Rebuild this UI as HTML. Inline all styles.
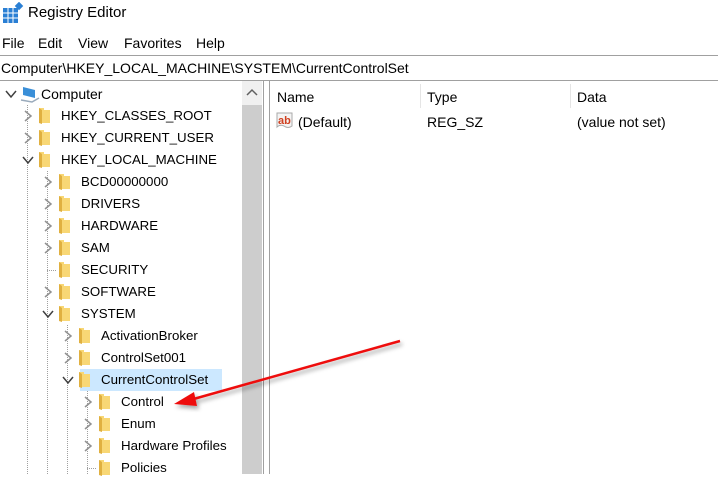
<!DOCTYPE html>
<html><head><meta charset="utf-8"><style>
*{margin:0;padding:0;box-sizing:border-box}
body{width:718px;height:474px;overflow:hidden;background:#fff;font-family:"Liberation Sans",sans-serif;font-size:14px;color:#000;position:relative}
.a{position:absolute;white-space:nowrap}
.t{font-size:13.3px}
</style></head><body>
<svg class="a" style="left:2px;top:2px" width="22" height="22" viewBox="0 0 22 22">
<rect x="1" y="6" width="15" height="15" fill="#2a7fd4"/>
<g stroke="#fff" stroke-width="1"><line x1="6" y1="6" x2="6" y2="21"/><line x1="11" y1="6" x2="11" y2="21"/><line x1="1" y1="11" x2="16" y2="11"/><line x1="1" y1="16" x2="16" y2="16"/></g>
<rect x="14" y="1" width="6" height="6" fill="#2a7fd4" transform="rotate(45 17 4)"/>
</svg>
<div class="a" style="left:28px;top:4px;font-size:15px">Registry Editor</div>
<div class="a" style="left:2px;top:35px">File</div>
<div class="a" style="left:38px;top:35px">Edit</div>
<div class="a" style="left:78px;top:35px">View</div>
<div class="a" style="left:124px;top:35px">Favorites</div>
<div class="a" style="left:196px;top:35px">Help</div>
<div class="a" style="left:0;top:55px;width:718px;height:1px;background:#a0a0a0"></div>
<div class="a" style="left:1px;top:60px">Computer\HKEY_LOCAL_MACHINE\SYSTEM\CurrentControlSet</div>
<div class="a" style="left:0;top:80px;width:718px;height:1px;background:#a0a0a0"></div>
<div class="a" style="left:242px;top:81px;width:20px;height:393px;background:#cdcdcd"></div>
<div class="a" style="left:242px;top:81px;width:20px;height:24px;background:#f0f0f0"></div>
<svg class="a" style="left:245px;top:87px" width="14" height="10"><path d="M2 8 L7 3 L12 8" fill="none" stroke="#606060" stroke-width="1.5"/></svg>
<div class="a" style="left:263px;top:81px;width:1px;height:393px;background:#a0a0a0"></div>
<div class="a" style="left:269px;top:81px;width:1px;height:393px;background:#a0a0a0"></div>
<div class="a" style="left:277px;top:89px">Name</div>
<div class="a" style="left:420px;top:84px;width:1px;height:24px;background:#e5e5e5"></div>
<div class="a" style="left:427px;top:89px">Type</div>
<div class="a" style="left:570px;top:84px;width:1px;height:24px;background:#e5e5e5"></div>
<div class="a" style="left:577px;top:89px">Data</div>
<svg class="a" style="left:276px;top:112px" width="20" height="18"><path d="M1 1 H16 V14 Q12 17 8 14 Q4 12 1 15 Z" fill="#f4f4f4" stroke="#aaa"/><text x="2" y="12" font-family="Liberation Sans" font-weight="bold" font-size="11" fill="#d04020">ab</text></svg>
<div class="a" style="left:298px;top:114px">(Default)</div>
<div class="a" style="left:427px;top:114px">REG_SZ</div>
<div class="a" style="left:577px;top:114px">(value not set)</div>
<div class="a" style="left:27px;top:105px;height:369px;border-left:1px dotted #a0a0a0"></div>
<div class="a" style="left:47px;top:171px;height:303px;border-left:1px dotted #a0a0a0"></div>
<div class="a" style="left:67px;top:325px;height:149px;border-left:1px dotted #a0a0a0"></div>
<div class="a" style="left:87px;top:391px;height:83px;border-left:1px dotted #a0a0a0"></div>
<div class="a" style="left:47px;top:270px;width:9px;border-top:1px dotted #a0a0a0"></div>
<div class="a" style="left:87px;top:468px;width:9px;border-top:1px dotted #a0a0a0"></div>
<div class="a" style="left:80px;top:369px;width:142px;height:22px;background:#cce8ff"></div>
<div id="tree"></div>
<svg class="a" style="left:0;top:0" width="718" height="474">
<defs><filter id="s"><feDropShadow dx="2" dy="3" stdDeviation="2" flood-opacity="0.35"/></filter></defs>
<g filter="url(#s)"><line x1="400" y1="341" x2="190" y2="400" stroke="#ee1111" stroke-width="2.5"/>
<path d="M174 404 L194 392 L197 406 Z" fill="#ee1111"/></g>
</svg>
<script>
var rows=[
[0,"Computer","open",94,true],
[1,"HKEY_CLASSES_ROOT","c",116],[1,"HKEY_CURRENT_USER","c",138],[1,"HKEY_LOCAL_MACHINE","open",160],
[2,"BCD00000000","c",182],[2,"DRIVERS","c",204],[2,"HARDWARE","c",226],[2,"SAM","c",248],[2,"SECURITY","",270],[2,"SOFTWARE","c",292],[2,"SYSTEM","open",314],
[3,"ActivationBroker","c",336],[3,"ControlSet001","c",358],[3,"CurrentControlSet","open",380],
[4,"Control","c",402],[4,"Enum","c",424],[4,"Hardware Profiles","c",446],[4,"Policies","",468]];
var h="";
rows.forEach(function(r){
 var lv=r[0],y=r[3]-11;
 var tx=lv==0?41:(61+(lv-1)*20);
 var fx=lv==0?20:(38+(lv-1)*20);
 var cx=lv==0?4:(21+(lv-1)*20);
 if(r[2]=="c")h+='<svg class="a" style="left:'+cx+'px;top:'+(y+4)+'px" width="14" height="14"><path d="M4 2 L10 7 L4 12" fill="none" stroke="#909090" stroke-width="1.5"/></svg>';
 if(r[2]=="open")h+='<svg class="a" style="left:'+cx+'px;top:'+(y+4)+'px" width="14" height="14"><path d="M2 4 L7 10 L12 4" fill="none" stroke="#404040" stroke-width="1.5"/></svg>';
 if(r[4])h+='<svg class="a" style="left:'+fx+'px;top:'+(y+2)+'px" width="20" height="18"><path d="M3 2 L15 5 L15 13 L3 10 Z" fill="#3a8fd8"/><path d="M1 15 L12 17 L19 13" fill="none" stroke="#9ab" stroke-width="1.5"/></svg>';
 else h+='<svg class="a" style="left:'+fx+'px;top:'+(y+2)+'px" width="14" height="18"><path d="M1 1 L6 1 L6 3 L12 3 L12 16 L1 16 Z" fill="#f8d775"/><path d="M1 1 L4 3 L4 17 L1 16 Z" fill="#e0b040"/></svg>';
 h+='<div class="a'+(lv>0?' t':'')+'" style="left:'+tx+'px;top:'+(y+3)+'px">'+r[1]+'</div>';
});
document.getElementById("tree").innerHTML=h;
</script>
</body></html>
